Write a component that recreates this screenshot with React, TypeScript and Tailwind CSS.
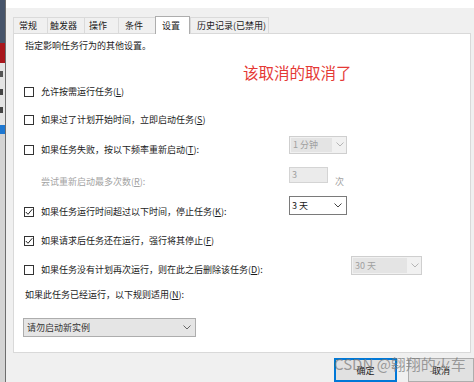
import type { ReactNode } from "react";

const font = "font-['Noto_Sans_CJK_SC','Noto_Sans',sans-serif]";

const Chevron = ({ color = "#555" }: { color?: string }) => (
  <svg width="8" height="5" viewBox="0 0 8 5" fill="none">
    <polyline points="0.5,0.5 4,4 7.5,0.5" stroke={color} strokeWidth="1" />
  </svg>
);

const CheckBox = ({ checked = false }: { checked?: boolean }) => (
  <div className="w-[10px] h-[10px] border border-[#333] bg-white flex items-center justify-center shrink-0">
    {checked && (
      <svg width="8" height="8" viewBox="0 0 8 8" fill="none">
        <polyline points="0.8,4 3,6.3 7.3,1.2" stroke="#222" strokeWidth="1" />
      </svg>
    )}
  </div>
);

const Key = ({ k }: { k: string }) => <span className="underline">{k}</span>;

const tabs = [
  { label: "常规", w: "w-[35px]", pl: "pl-[5px]" },
  { label: "触发器", w: "w-[38px]", pl: "pl-[2px]" },
  { label: "操作", w: "w-[35px]", pl: "pl-[4px]" },
  { label: "条件", w: "w-[38px]", pl: "pl-[6px]" },
  { label: "设置", w: "w-[35px]", pl: "pl-[6px]", active: true },
  { label: "历史记录(已禁用)", w: "w-[79px]", pl: "pl-[6px]" },
];

const Row = ({
  h,
  checked,
  label,
  labelW,
  children,
}: {
  h: string;
  checked?: boolean;
  label: ReactNode;
  labelW: string;
  children?: ReactNode;
}) => (
  <div className={`flex items-center pl-[10px] ${h}`}>
    <CheckBox checked={checked} />
    <div className={`ml-[7px] ${labelW} text-[9px] leading-none text-[#1a1a1a] whitespace-nowrap`}>
      {label}
    </div>
    {children}
  </div>
);

export default function App() {
  return (
    <div className={`w-[474px] h-[382px] overflow-hidden flex bg-[#f0f0f0] ${font}`}>
      {/* desktop strip on the left */}
      <div className="w-[5px] flex flex-col shrink-0">
        <div className="h-[43px] bg-[#46546a]" />
        <div className="h-[20px] bg-[#a8161c]" />
        <div className="h-[62px] bg-[#e4e4e4] flex flex-col gap-[12px] pt-[8px]">
          <div className="h-[6px] w-[3px] bg-[#555]" />
          <div className="h-[6px] w-[3px] bg-[#444]" />
          <div className="h-[6px] w-[3px] bg-[#444]" />
        </div>
        <div className="h-[9px] bg-[#1e78d2]" />
        <div className="flex-1 bg-[#d4d4d4]" />
      </div>
      <div className="w-px bg-[#6e6e6e] shrink-0" />

      <div className="flex-1 flex flex-col">
        <div className="h-[8px] bg-white" />

        {/* tabs */}
        <div className="h-[25px] flex items-end pl-[7px] text-[9px] leading-none text-[#1a1a1a]">
          {tabs.map((t) =>
            t.active ? (
              <div
                key={t.label}
                className={`${t.w} ${t.pl} h-[18px] -mb-px relative z-10 bg-white border border-[#adadad] border-b-0 flex items-center pt-[1px]`}
              >
                {t.label}
              </div>
            ) : (
              <div
                key={t.label}
                className={`${t.w} ${t.pl} h-[16px] border border-[#dadada] border-b-0 -mr-px flex items-center whitespace-nowrap`}
              >
                {t.label}
              </div>
            )
          )}
        </div>

        {/* settings panel */}
        <div className="ml-[7px] mr-[3px] h-[324px] bg-white border border-[#d9d9d9] relative flex flex-col">
          <div className="absolute left-[229px] top-[31px] text-[15.5px] leading-none text-[#e53935] whitespace-nowrap">
            该取消的取消了
          </div>

          <div className="h-[24px] flex items-center pl-[11px] text-[9px] leading-none text-[#1a1a1a]">
            指定影响任务行为的其他设置。
          </div>
          <div className="h-[20px]" />

          <Row h="h-[28px]" labelW="w-auto" label={<>允许按需运行任务(<Key k="L" />)</>} />
          <Row h="h-[28px]" labelW="w-auto" label={<>如果过了计划开始时间，立即启动任务(<Key k="S" />)</>} />
          <Row h="h-[32px]" labelW="w-[248px]" label={<>如果任务失败，按以下频率重新启动(<Key k="T" />):</>}>
            <div className="mb-[10px] w-[58px] h-[18px] border border-[#cfcfcf] bg-[#f1f1f1] flex items-center">
              <div className="m-px h-[14px] w-[41px] bg-[#e4e4e4] text-[9px] leading-none text-[#a0a0a0] flex items-center pl-[2px]">
                1 分钟
              </div>
              <div className="flex-1 flex justify-center">
                <Chevron color="#b5b5b5" />
              </div>
            </div>
          </Row>

          <div className="h-[32px] flex items-center pl-[27px]">
            <div className="w-[248px] text-[9px] leading-none text-[#a3a3a3] whitespace-nowrap">
              尝试重新启动最多次数(<Key k="R" />):
            </div>
            <div className="mb-[14px] w-[39px] h-[16px] border border-[#d4d4d4] bg-[#ebebeb] text-[9px] leading-none text-[#a0a0a0] flex items-center pl-[2px]">
              3
            </div>
            <div className="ml-[7px] text-[9px] leading-none text-[#a3a3a3]">次</div>
          </div>

          <Row h="h-[28px]" checked labelW="w-[248px]" label={<>如果任务运行时间超过以下时间，停止任务(<Key k="K" />):</>}>
            <div className="mb-[12px] w-[58px] h-[19px] border border-[#7a7a7a] bg-white flex items-center justify-between pl-[2px] pr-[4px] text-[9px] leading-none text-[#1a1a1a]">
              <span>3 天</span>
              <Chevron color="#444" />
            </div>
          </Row>
          <Row h="h-[30px]" checked labelW="w-auto" label={<>如果请求后任务还在运行，强行将其停止(<Key k="F" />)</>} />
          <Row h="h-[28px]" labelW="w-[310px]" label={<>如果任务没有计划再次运行，则在此之后删除该任务(<Key k="D" />):</>}>
            <div className="mb-[9px] w-[71px] h-[19px] border border-[#cfcfcf] bg-[#f1f1f1] flex items-center">
              <div className="m-px h-[15px] w-[54px] bg-[#e4e4e4] text-[9px] leading-none text-[#a0a0a0] flex items-center pl-[2px]">
                30 天
              </div>
              <div className="flex-1 flex justify-center">
                <Chevron color="#b5b5b5" />
              </div>
            </div>
          </Row>

          <div className="h-[22px] flex items-center pl-[11px] text-[9px] leading-none text-[#1a1a1a]">
            如果此任务已经运行，以下规则适用(<Key k="N" />):
          </div>

          <div className="mt-[12px] ml-[9px] w-[173px] h-[19px] border border-[#adadad] bg-[#e5e5e5] flex items-center justify-between pl-[3px] pr-[4px] text-[9px] leading-none text-[#333]">
            <span>请勿启动新实例</span>
            <Chevron color="#666" />
          </div>
        </div>

        {/* bottom buttons */}
        <div className="flex-1 relative flex items-start pt-[5px] pl-[328px] gap-[11px]">
          <div className="w-[63px] h-[24px] border border-[#0078d7] bg-[#e1e1e1] shadow-[inset_0_0_0_1px_#0078d7] flex items-center justify-center text-[9px] leading-none text-[#1a1a1a]">
            确定
          </div>
          <div className="w-[66px] h-[24px] border border-[#adadad] bg-[#e1e1e1] flex items-center justify-center text-[9px] leading-none text-[#1a1a1a]">
            取消
          </div>
          <div className="absolute left-[328px] top-[3px] text-[15px] leading-none text-[#777]/70 whitespace-nowrap">
            CSDN @翱翔的火车
          </div>
        </div>
      </div>
    </div>
  );
}
